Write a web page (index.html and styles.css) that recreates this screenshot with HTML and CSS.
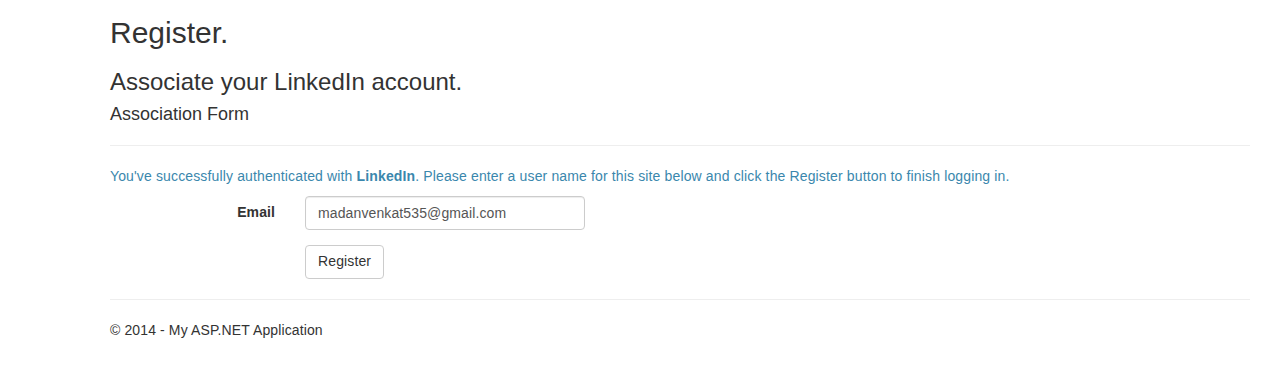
FILE: index.html
```html
<!DOCTYPE html>
<html>
<head>
<meta charset="utf-8">
<title>Register</title>
<link rel="stylesheet" href="styles.css">
</head>
<body>
<div class="container">
  <h2 class="title">Register.</h2>
  <h3 class="subtitle">Associate your LinkedIn account.</h3>
  <form class="form">
    <h4 class="form-title">Association Form</h4>
    <hr class="rule">
    <p class="info">You've successfully authenticated with <strong>LinkedIn</strong>. Please enter a user name for this site below and click the Register button to finish logging in.</p>
    <div class="form-group">
      <label class="label">Email</label>
      <div class="field"><input class="input" type="text" value="madanvenkat535@gmail.com"></div>
    </div>
    <div class="form-group">
      <div></div>
      <div class="field"><button type="button" class="btn">Register</button></div>
    </div>
  </form>
  <hr class="rule">
  <footer class="footer">
    <p class="copy">© 2014 - My ASP.NET Application</p>
  </footer>
</div>
</body>
</html>
```

FILE: styles.css
```css
* { box-sizing: border-box; }
html, body { margin: 0; padding: 0; background: #fff; }
body {
  font-family: "Liberation Sans", Arial, Helvetica, sans-serif;
  font-size: 14px;
  line-height: 1.42857;
  color: #333;
}
.container {
  padding: 0 20px 0 110px;
}
.title {
  font-size: 30px;
  font-weight: 500;
  line-height: 1.1;
  margin: 16px 0 10px;
}
.subtitle {
  font-size: 24px;
  font-weight: 500;
  line-height: 1.1;
  margin: 20px 0 10px;
}
.form { margin: 0; }
.form-title {
  font-size: 18px;
  font-weight: 500;
  line-height: 1.1;
  margin: 10px 0 10px;
}
.rule {
  border: 0;
  border-top: 1px solid #eee;
  margin: 20px 0;
  height: 0;
}
.info {
  color: #3a87ad;
  margin: 0 0 10px;
  letter-spacing: 0.14px;
  position: relative;
  top: 1px;
}
.info strong { font-weight: bold; }
.form-group {
  display: grid;
  grid-template-columns: 165px 1fr;
  column-gap: 30px;
  margin-bottom: 15px;
}
.label {
  text-align: right;
  font-weight: bold;
  padding-top: 7px;
  letter-spacing: 0.1px;
}
.input {
  display: block;
  width: 280px;
  height: 34px;
  padding: 6px 12px;
  font-family: inherit;
  font-size: 14px;
  line-height: 1.42857;
  letter-spacing: 0.12px;
  color: #555;
  background: #fff;
  border: 1px solid #ccc;
  border-radius: 4px;
  box-shadow: inset 0 1px 1px rgba(0,0,0,0.075);
}
.btn {
  display: inline-block;
  height: 34px;
  padding: 6px 12px;
  font-family: inherit;
  font-size: 14px;
  line-height: 1.42857;
  letter-spacing: 0.12px;
  color: #333;
  background: #fff;
  border: 1px solid #ccc;
  border-radius: 4px;
}
.footer { margin: 0; }
.copy {
  margin: 0 0 10px;
  letter-spacing: 0.12px;
  position: relative;
  top: 1px;
}
```
